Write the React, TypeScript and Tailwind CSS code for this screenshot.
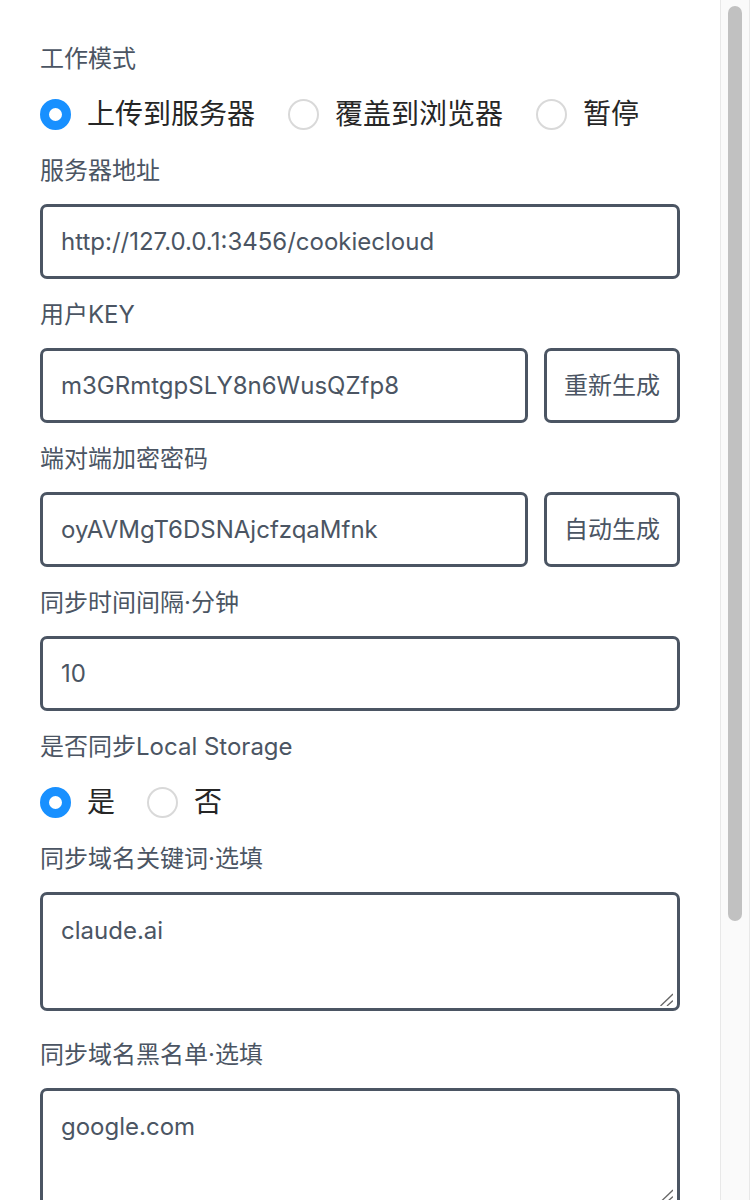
import React from "react";

const font = { fontFamily: 'Inter, "Noto Sans CJK SC", sans-serif' };

function Radio({ checked, label, className = "" }: { checked: boolean; label: string; className?: string }) {
  return (
    <div className={"flex items-center " + className}>
      {checked ? (
        <span className="box-border h-[31px] w-[31px] rounded-full border-[9px] border-[#1890ff] bg-white" />
      ) : (
        <span className="box-border h-[31px] w-[31px] rounded-full border-2 border-[#d9d9d9] bg-white" />
      )}
      <span className="ml-[16px] text-[28px] leading-[40px] text-[#262626]">{label}</span>
    </div>
  );
}

function Label({ children, mb = "mb-[17px]" }: { children: React.ReactNode; mb?: string }) {
  return <div className={"text-[24px] leading-[32px] text-[#4b5563] " + mb}>{children}</div>;
}

function Input({ value, className = "" }: { value: string; className?: string }) {
  return (
    <input
      readOnly
      value={value}
      style={font}
      className={
        "box-border h-[75px] rounded-[7px] border-[3px] border-[#4b5563] bg-white px-[18px] text-[24px] text-[#4b5563] outline-none " +
        className
      }
    />
  );
}

function Button({ children }: { children: React.ReactNode }) {
  return (
    <button
      style={font}
      className="box-border h-[75px] w-[136px] shrink-0 rounded-[7px] border-[3px] border-[#4b5563] bg-white text-[24px] text-[#4b5563]"
    >
      {children}
    </button>
  );
}

function TextArea({ value, className = "" }: { value: string; className?: string }) {
  return (
    <div className={"relative " + className}>
      <textarea
        readOnly
        value={value}
        style={font}
        className="box-border block h-[119px] w-full resize-none rounded-[7px] border-[3px] border-[#4b5563] bg-white px-[18px] pt-[20px] text-[24px] leading-[32px] text-[#4b5563] outline-none"
      />
      <svg
        className="pointer-events-none absolute bottom-[5px] right-[7px]"
        width="16"
        height="16"
        viewBox="0 0 16 16"
      >
        <line x1="3.5" y1="16" x2="16" y2="4" stroke="#666" strokeWidth="1.3" />
        <line x1="10" y1="16" x2="16" y2="10.5" stroke="#666" strokeWidth="1.3" />
      </svg>
    </div>
  );
}

export default function App() {
  return (
    <div style={font} className="flex h-[1200px] w-[750px] overflow-hidden bg-white">
      <div className="w-[720px] shrink-0 px-10 pt-[43px]">
        <Label mb="mb-[19px]">工作模式</Label>
        <div className="mb-[21px] flex h-[40px] items-center">
          <Radio checked label="上传到服务器" />
          <Radio checked={false} label="覆盖到浏览器" className="ml-[33px]" />
          <Radio checked={false} label="暂停" className="ml-[33px]" />
        </div>

        <Label>服务器地址</Label>
        <Input value="http://127.0.0.1:3456/cookiecloud" className="mb-[20px] w-full" />

        <Label>用户KEY</Label>
        <div className="mb-[20px] flex gap-[16px]">
          <Input value="m3GRmtgpSLY8n6WusQZfp8" className="min-w-0 flex-1" />
          <Button>重新生成</Button>
        </div>

        <Label>端对端加密密码</Label>
        <div className="mb-[20px] flex gap-[16px]">
          <Input value="oyAVMgT6DSNAjcfzqaMfnk" className="min-w-0 flex-1" />
          <Button>自动生成</Button>
        </div>

        <Label>同步时间间隔·分钟</Label>
        <Input value="10" className="mb-[20px] w-full" />

        <Label mb="mb-[19px]">是否同步Local Storage</Label>
        <div className="mb-[21px] flex h-[40px] items-center">
          <Radio checked label="是" />
          <Radio checked={false} label="否" className="ml-[32px]" />
        </div>

        <Label>同步域名关键词·选填</Label>
        <TextArea value="claude.ai" className="mb-[28px]" />

        <Label>同步域名黑名单·选填</Label>
        <TextArea value="google.com" />
      </div>
      <div className="box-border flex h-full w-[30px] shrink-0 justify-center border-l border-r border-[#e8e8e8] bg-[#fafafa] pt-[6px]">
        <div className="h-[915px] w-[14px] rounded-full bg-[#c1c1c1]" />
      </div>
    </div>
  );
}
